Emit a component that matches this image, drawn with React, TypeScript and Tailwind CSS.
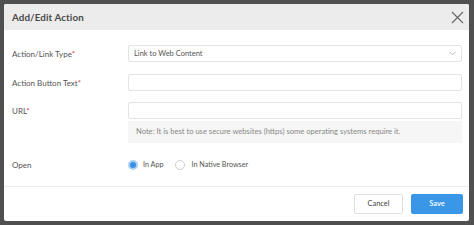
import React from "react";

export default function App() {
  return (
    <div
      className="w-[474px] h-[225px] bg-[#505050] pt-[4px] pl-[4px] overflow-hidden"
      style={{ fontFamily: "Lato, 'Liberation Sans', sans-serif" }}
    >
      <div className="w-[465px] h-[217px] bg-white rounded-[2px] flex flex-col overflow-hidden">
        {/* Header */}
        <div className="h-[26px] bg-[#ececec] flex items-center justify-between pl-[8px] pr-[5px] shrink-0">
          <h1 className="text-[9.8px] font-bold text-[#4a4a4a] tracking-[0.1px]">Add/Edit Action</h1>
          <svg width="13" height="13" viewBox="0 0 13 13" className="text-[#666]">
            <path d="M1 1 L12 12 M12 1 L1 12" stroke="currentColor" strokeWidth="1.1" />
          </svg>
        </div>

        {/* Body */}
        <div className="flex flex-col pl-[8px] pr-[7px] pt-[15px] text-[8px] text-[#555]">
          <div className="grid grid-cols-[116px_1fr] items-center h-[17px]">
            <label>
              Action/Link Type<span className="text-[#e0453f]">*</span>
            </label>
            <div className="h-[17px] border border-[#e3e3e3] rounded-[2px] flex items-center justify-between px-[5px] text-[#555]">
              <span className="text-[7.5px]">Link to Web Content</span>
              <svg width="7" height="5" viewBox="0 0 7 5">
                <path d="M0.5 0.8 L3.5 3.8 L6.5 0.8" fill="none" stroke="#aaa" strokeWidth="0.8" />
              </svg>
            </div>
          </div>

          <div className="grid grid-cols-[116px_1fr] items-center h-[17px] mt-[12px]">
            <label>
              Action Button Text<span className="text-[#e0453f]">*</span>
            </label>
            <div className="h-[17px] border border-[#e3e3e3] rounded-[2px]" />
          </div>

          <div className="grid grid-cols-[116px_1fr] items-center h-[17px] mt-[11px]">
            <label>
              URL<span className="text-[#e0453f]">*</span>
            </label>
            <div className="h-[17px] border border-[#e3e3e3] rounded-[2px]" />
          </div>

          <div className="grid grid-cols-[116px_1fr] mt-[2px]">
            <div />
            <div className="h-[22px] bg-[#f6f6f6] flex items-center pl-[8px] text-[7.6px] text-[#888]">
              Note: It is best to use secure websites (https) some operating systems require it.
            </div>
          </div>

          <div className="grid grid-cols-[116px_1fr] items-center h-[20px] mt-[12px]">
            <label>Open</label>
            <div className="flex items-center">
              <span className="w-[10px] h-[10px] rounded-full bg-[#3b8fe3] border-[2px] border-[#a9d0f5] shrink-0" />
              <span className="ml-[5px] text-[7.2px]">In App</span>
              <span className="w-[10px] h-[10px] rounded-full border border-[#cfcfcf] shrink-0 ml-[12px]" />
              <span className="ml-[6px] text-[7.2px]">In Native Browser</span>
            </div>
          </div>
        </div>

        {/* Footer */}
        <div className="mt-auto border-t border-[#ececec] h-[35px] flex items-center justify-end gap-[8px] pr-[6px] shrink-0">
          <button className="w-[49px] h-[20px] border border-[#e0e0e0] rounded-[2px] bg-white text-[7.5px] text-[#444]">
            Cancel
          </button>
          <button className="w-[52px] h-[20px] rounded-[2px] bg-[#3a97e8] text-[7.5px] text-white font-semibold">
            Save
          </button>
        </div>
      </div>
    </div>
  );
}
